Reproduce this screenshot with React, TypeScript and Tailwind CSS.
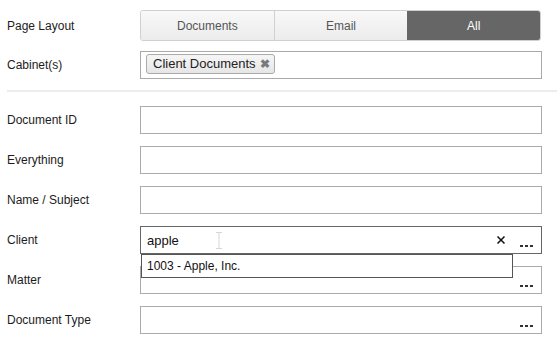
import React from "react";

const font = { fontFamily: '"Liberation Sans", Arial, sans-serif' };

function Dots() {
  return (
    <div className="absolute right-[8px] bottom-[6px] flex gap-[2px]">
      <span className="block w-[3px] h-[2px] bg-[#333]" />
      <span className="block w-[3px] h-[2px] bg-[#333]" />
      <span className="block w-[3px] h-[2px] bg-[#333]" />
    </div>
  );
}

function Row({ label, children }: { label: string; children: React.ReactNode }) {
  return (
    <div className="flex items-center">
      <div className="w-[133px] shrink-0 text-[12px] text-[#1c1c1c]">{label}</div>
      {children}
    </div>
  );
}

function Box({ dots, dark, children }: { dots?: boolean; dark?: boolean; children?: React.ReactNode }) {
  return (
    <div
      className={`relative w-[402px] h-[28px] bg-white border ${dark ? "border-[#666]" : "border-[#aaa]"}`}
    >
      {children}
      {dots && <Dots />}
    </div>
  );
}

export default function App() {
  const segments = ["Documents", "Email", "All"];
  return (
    <div className="w-[557px] h-[340px] bg-white overflow-hidden pl-[7px] pt-[10px] relative" style={font}>
      <Row label="Page Layout">
        <div className="flex w-[401px] h-[31px] rounded-[3px] overflow-hidden border border-[#d0d0d0]">
          {segments.map((s, i) => (
            <div
              key={s}
              className={`flex-1 flex items-center justify-center text-[12px] ${
                i === 2
                  ? "bg-[#666] text-white"
                  : "bg-gradient-to-b from-[#f8f8f8] to-[#ececec] text-[#555]"
              } ${i === 1 ? "border-l border-[#d0d0d0]" : ""}`}
            >
              {s}
            </div>
          ))}
        </div>
      </Row>

      <div className="mt-[10px]">
        <Row label="Cabinet(s)">
          <Box>
            <div className="absolute left-[5px] top-[2px] h-[20px] flex items-center gap-[4px] pl-[6px] pr-[4px] rounded-[3px] border border-[#aaa] bg-gradient-to-b from-[#f6f6f6] to-[#e6e6e6] text-[13px] text-[#222]">
              <span>Client Documents</span>
              <span className="text-[#7a7a7a] text-[12px] font-bold leading-none">✖</span>
            </div>
          </Box>
        </Row>
      </div>

      <div className="mt-[11px] h-[2px] bg-[#ececec]" />

      <div className="mt-[14px] flex flex-col gap-[12px]">
        <Row label="Document ID">
          <Box />
        </Row>
        <Row label="Everything">
          <Box />
        </Row>
        <Row label="Name / Subject">
          <Box />
        </Row>
        <Row label="Client">
          <Box dots dark>
            <span className="absolute left-[6px] top-[4px] text-[13px] text-[#111]">apple</span>
            <svg className="absolute left-[74px] top-[5px]" width="8" height="17" viewBox="0 0 8 17">
              <path d="M1 0.5h6M4 0.5v16M1 16.5h6" stroke="#d6d6d6" strokeWidth="1" fill="none" />
            </svg>
            <svg className="absolute left-[356px] top-[9px]" width="8" height="8" viewBox="0 0 8 8">
              <path d="M0.5 0.5L7.5 7.5M7.5 0.5L0.5 7.5" stroke="#111" strokeWidth="1.5" />
            </svg>
          </Box>
        </Row>
        <Row label="Matter">
          <Box dots />
        </Row>
        <Row label="Document Type">
          <Box dots />
        </Row>
      </div>

      <div className="absolute left-[141px] top-[254px] w-[372px] h-[24px] bg-white border border-[#555] flex items-center pl-[5px] text-[12px] text-[#111]">
        1003 - Apple, Inc.
      </div>
    </div>
  );
}
